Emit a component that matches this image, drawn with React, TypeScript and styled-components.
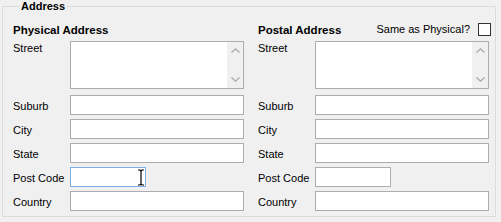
import React from 'react'
import styled, { createGlobalStyle } from 'styled-components'

const GlobalStyle = createGlobalStyle`
  html, body {
    margin: 0;
    padding: 0;
    background: #f0f0f0;
  }
  body {
    font-family: "Liberation Sans", Arial, sans-serif;
    font-size: 11px;
    color: #000;
  }
`

const Chevron = ({ up }: { up?: boolean }) => (
  <svg width="9" height="5" viewBox="0 0 9 5">
    <path
      d={up ? 'M0.5 4.5 L4.5 0.8 L8.5 4.5' : 'M0.5 0.5 L4.5 4.2 L8.5 0.5'}
      fill="none"
      stroke="#a6a6a6"
      strokeWidth="1.2"
    />
  </svg>
)

const IBeam = () => (
  <svg width="8" height="17" viewBox="0 0 8 17">
    <path
      d="M1 1h2l1 1 1-1h2M4 2v13M1 16h2l1-1 1 1h2"
      fill="none"
      stroke="#000"
      strokeWidth="1.2"
    />
  </svg>
)

const Memo = () => (
  <MemoBox>
    <MemoText />
    <ScrollTrack>
      <ScrollButton><Chevron up /></ScrollButton>
      <ScrollButton><Chevron /></ScrollButton>
    </ScrollTrack>
  </MemoBox>
)

type AddressProps = {
  title: string
  focusedPostCode?: boolean
  extra?: React.ReactNode
}

const AddressColumn = ({ title, focusedPostCode, extra }: AddressProps) => (
  <Column>
    <HeaderRow>
      <Heading>{title}</Heading>
      {extra}
    </HeaderRow>
    <Label $top>Street</Label>
    <Memo />
    <Label>Suburb</Label>
    <TextBox />
    <Label>City</Label>
    <TextBox />
    <Label>State</Label>
    <TextBox />
    <Label>Post Code</Label>
    <PostWrap>
      <TextBox $narrow $focused={focusedPostCode} />
      {focusedPostCode && (
        <Cursor>
          <IBeam />
        </Cursor>
      )}
    </PostWrap>
    <Label>Country</Label>
    <TextBox />
  </Column>
)

const App = () => {
  return (
    <>
      <GlobalStyle />
      <Group>
        <Legend>Address</Legend>
        <Columns>
          <AddressColumn title="Physical Address" focusedPostCode />
          <AddressColumn
            title="Postal Address"
            extra={
              <SameAs>
                Same as Physical?
                <Check type="checkbox" />
              </SameAs>
            }
          />
        </Columns>
      </Group>
    </>
  )
}

export default App

const Group = styled.fieldset`
  margin: 0 0 0 2px;
  width: 494px;
  box-sizing: border-box;
  min-width: 0;
  border: 1px solid #dcdcdc;
  padding: 8px 0 5px 10px;
`

const Legend = styled.legend`
  margin-left: 6px;
  padding: 0 2px;
  font-weight: bold;
  font-size: 11px;
  line-height: 13px;
`

const Columns = styled.div`
  display: grid;
  grid-template-columns: 231px 233px;
  column-gap: 14px;
`

const Column = styled.div`
  display: grid;
  grid-template-columns: 57px 1fr;
  row-gap: 4px;
  align-items: center;
`

const HeaderRow = styled.div`
  grid-column: 1 / -1;
  display: flex;
  justify-content: space-between;
  align-items: center;
  height: 16px;
`

const Heading = styled.span`
  font-weight: bold;
  font-size: 11.5px;
  line-height: 16px;
  padding-top: 1px;
`

const SameAs = styled.label`
  display: flex;
  align-items: center;
  gap: 8px;
  line-height: 16px;
`

const Check = styled.input`
  appearance: none;
  margin: 0;
  width: 13px;
  height: 13px;
  box-sizing: border-box;
  border: 1px solid #333;
  background: #fff;
`

const Label = styled.label<{ $top?: boolean }>`
  align-self: ${p => (p.$top ? 'start' : 'center')};
  line-height: 14px;
  padding-top: ${p => (p.$top ? '0' : '1px')};
`

const TextBox = styled.input<{ $narrow?: boolean; $focused?: boolean }>`
  display: block;
  width: ${p => (p.$narrow ? 76 : 174)}px;
  height: 20px;
  box-sizing: border-box;
  margin: 0;
  padding: 0 3px;
  border: 1px solid ${p => (p.$focused ? '#7ab0e6' : '#abadb3')};
  background: #fff;
  font: inherit;
  outline: none;
`

const PostWrap = styled.div`
  position: relative;
  width: 76px;
  height: 20px;
`

const Cursor = styled.div`
  position: absolute;
  left: 67px;
  top: 2px;
  line-height: 0;
`

const MemoBox = styled.div`
  align-self: start;
  display: flex;
  width: 174px;
  height: 48px;
  box-sizing: border-box;
  margin-bottom: 2px;
  border: 1px solid #abadb3;
  background: #fff;
`

const MemoText = styled.textarea`
  flex: 1;
  min-width: 0;
  margin: 0;
  padding: 2px 3px;
  border: 0;
  resize: none;
  outline: none;
  overflow: hidden;
  background: transparent;
  font: inherit;
`

const ScrollTrack = styled.div`
  width: 16px;
  display: flex;
  flex-direction: column;
  justify-content: space-between;
  background: #f0f0f0;
`

const ScrollButton = styled.div`
  height: 17px;
  display: flex;
  align-items: center;
  justify-content: center;
`
